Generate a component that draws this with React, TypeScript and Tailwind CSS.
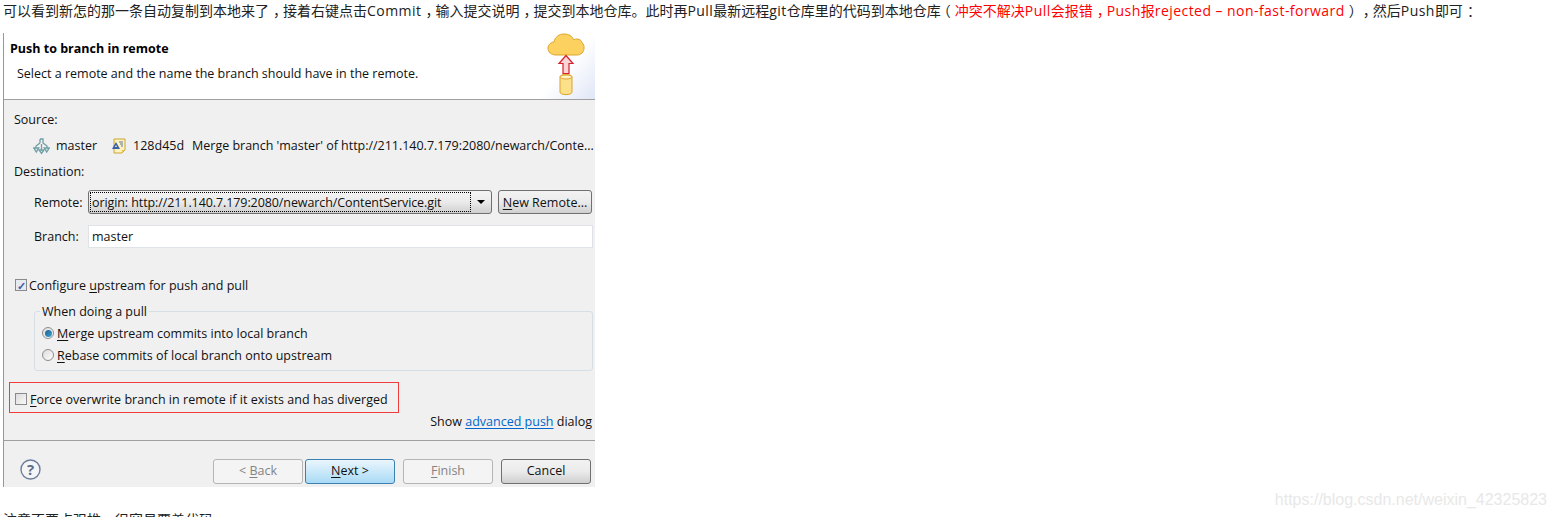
import type { ReactNode } from 'react'

const dialogFont = 'font-["Open_Sans","Noto_Sans",sans-serif] text-[12.5px] text-[#111]'

// underlined mnemonic letter
function Mn({ children }: { children: ReactNode }) {
  return <span className="underline underline-offset-2">{children}</span>
}

// full-width punctuation sits centred in its em box in the source page
function Right({ children }: { children: ReactNode }) {
  return <span className="inline-block pl-[4px] pr-[3px] [font-feature-settings:'halt']">{children}</span>
}

function Left({ children }: { children: ReactNode }) {
  return <span className="inline-block pl-[3px] pr-[4px] [font-feature-settings:'halt']">{children}</span>
}

function Latin({ children }: { children: ReactNode }) {
  return <span className="tracking-[0.45px]">{children}</span>
}

function HeaderArt() {
  return (
    <svg width="48" height="66" viewBox="0 0 48 66" className="shrink-0 ml-[8px]">
      <path d="M9 22c-5 0-8-3-8-7 0-3 3-6 6-6 1-5 5-8 10-8 5 0 8 2 10 6 1-1 2-1 3-1 3 0 5 2 5 4 2 1 2 3 2 5 0 4-3 7-7 7z" fill="#fdd15f" stroke="#dba52e" />
      <path d="M19 22.500l7 8h-4v10h-6v-10h-4z" fill="#fbd5d5" stroke="#d6202c" strokeWidth="1.2" />
      <path d="M13 44c0-3.500 12-3.500 12 0v15c0 3.500-12 3.500-12 0z" fill="#fde08a" stroke="#dba52e" />
      <ellipse cx="19" cy="44" rx="6" ry="2" fill="#fff2c4" stroke="#dba52e" />
    </svg>
  )
}

function BranchIcon() {
  return (
    <svg width="17" height="17" viewBox="0 0 17 17" fill="none" stroke="#6f9ea5" strokeWidth="1.3" className="shrink-0">
      <path d="M7 1h3v4l4 3v2M7 5V1M7 5L3 8v2M8.500 6v6" />
      <path d="M0.800 10h5l-2.500 4zM11.200 10h5l-2.500 4z" fill="#d5e8ea" />
      <path d="M6 12h5l-2.500 3.500z" fill="#d5e8ea" />
    </svg>
  )
}

function CommitIcon() {
  return (
    <svg width="16" height="16" viewBox="0 0 16 16">
      <path d="M3 1h11v11l-3 3H3z" fill="#fdf3bf" stroke="#c9a436" />
      <path d="M11 15l3-3h-3z" fill="#e5c04f" />
      <path d="M1 11l4-7 4 7z" fill="#3a62a8" />
      <path d="M4 9l1-2 1 2z" fill="#fdf3bf" />
      <path d="M8 4h4M9 6h3M10 8h2" stroke="#5a77a6" />
    </svg>
  )
}

function Radio({ checked }: { checked?: boolean }) {
  return (
    <span className="w-[12px] h-[12px] shrink-0 rounded-full border border-[#8d8d8d] bg-gradient-to-br from-[#dcdcdc] to-[#fdfdfd] flex items-center justify-center">
      {checked && <span className="w-[7px] h-[7px] rounded-full bg-gradient-to-br from-[#1b5f8f] to-[#3ea3d8]" />}
    </span>
  )
}

function WizardButton({ variant, children }: { variant: 'disabled' | 'primary' | 'normal'; children: ReactNode }) {
  const look = variant === 'primary'
    ? 'border-[#3c7fb1] bg-gradient-to-b from-[#eaf6fd] to-[#a9daf5] text-[#111]'
    : variant === 'normal'
      ? 'border-[#707070] bg-gradient-to-b from-[#f2f2f2] via-[#ebebeb] to-[#cfcfcf] text-[#111]'
      : 'border-[#b5b5b5] bg-[#f4f4f4] text-[#838383]'
  return (
    <div className={`w-[90px] h-[25px] rounded-[3px] border flex items-center justify-center ${look}`}>
      {children}
    </div>
  )
}

function PushDialog() {
  return (
    <div className={`ml-[3px] w-[592px] h-[454px] border-l border-[#8e9aa6] flex flex-col ${dialogFont}`}>
      <div className="h-[66px] bg-white flex shrink-0">
        <div className="flex-1 pl-[6px] pt-[7px]">
          <div className="font-bold leading-[17px] text-black">Push to branch in remote</div>
          <div className="pl-[7px] mt-[8px] leading-[17px]">Select a remote and the name the branch should have in the remote.</div>
        </div>
        <div className="w-[56px] bg-gradient-to-br from-white via-white to-[#dfe6f6] flex">
          <HeaderArt />
        </div>
      </div>
      <div className="h-[1px] bg-[#a0a0a0] shrink-0" />
      <div className="flex-1 bg-[#f0f0f0] flex flex-col pl-[10px] pt-[10px]">
        <div className="h-[18px] pt-[1px] leading-[18px]">Source:</div>
        <div className="h-[18px] mt-[8px] pl-[19px] pr-[2px] pt-[2px] flex items-center whitespace-nowrap">
          <BranchIcon />
          <span className="ml-[6px]">master</span>
          <span className="ml-[14px]"><CommitIcon /></span>
          <span className="ml-[6px]">128d45d</span>
          <span className="ml-[8px] tracking-[-0.02px]">Merge branch 'master' of http://211.140.7.179:2080/newarch/Conte...</span>
        </div>
        <div className="h-[18px] mt-[8px] pt-[1px] leading-[18px]">Destination:</div>
        <div className="h-[24px] mt-[10px] flex items-center pl-[20px] pr-[3px]">
          <span className="w-[54px] pt-[2px]">Remote:</span>
          <div className="w-[404px] h-[24px] rounded-[3px] border border-[#707070] bg-gradient-to-b from-[#f4f4f4] via-[#ebebeb] to-[#cfcfcf] flex items-center p-[1px]">
            <div className="flex-1 h-full border border-dotted border-black flex items-center pl-[1px] pt-[2px] whitespace-nowrap tracking-[-0.09px]">
              origin: http://211.140.7.179:2080/newarch/ContentService.git
            </div>
            <div className="w-[19px] flex justify-center">
              <span className="w-0 h-0 border-x-[4px] border-x-transparent border-t-[4px] border-t-black" />
            </div>
          </div>
          <div className="ml-[6px] w-[94px] h-[24px] pt-[2px] rounded-[3px] border border-[#707070] bg-gradient-to-b from-[#f2f2f2] via-[#ebebeb] to-[#cfcfcf] flex items-center justify-center">
            <span><Mn>N</Mn>ew Remote...</span>
          </div>
        </div>
        <div className="h-[23px] mt-[11px] flex items-center pl-[20px] pr-[2px]">
          <span className="w-[54px] pt-[2px]">Branch:</span>
          <div className="flex-1 h-[23px] bg-white border border-[#dfe3e8] flex items-center pl-[3px] pt-[2px]">master</div>
        </div>
        <div className="h-[18px] mt-[28px] flex items-center pl-[1px]">
          <span className="w-[12px] h-[12px] border border-[#8a8a8a] bg-[#e8eaf2] flex items-center justify-center text-[#3d5fa8] text-[11px] font-bold leading-none">✓</span>
          <span className="ml-[2px] pt-[2px]">Configure <Mn>u</Mn>pstream for push and pull</span>
        </div>
        <div className="relative ml-[20px] mr-[2px] mt-[17px] h-[60px] rounded-[3px] border border-[#d5dfe5] flex flex-col pl-[7px] pt-[12px] shrink-0">
          <span className="absolute left-[5px] top-[-9px] px-[2px] leading-[17px] bg-[#f0f0f0]">When doing a pull</span>
          <div className="h-[18px] flex items-center">
            <Radio checked />
            <span className="ml-[3px] pt-[2px]"><Mn>M</Mn>erge upstream commits into local branch</span>
          </div>
          <div className="h-[18px] mt-[4px] flex items-center">
            <Radio />
            <span className="ml-[3px] pt-[2px]"><Mn>R</Mn>ebase commits of local branch onto upstream</span>
          </div>
        </div>
        <div className="-ml-[5px] w-[390px] h-[31px] mt-[11px] border border-[#f23b3b] flex items-center pl-[5px] pt-[3px] shrink-0">
          <span className="w-[12px] h-[12px] border border-[#8a8a8a] bg-gradient-to-br from-[#dcdcdc] to-[#f8f8f8]" />
          <span className="ml-[3px] pt-[2px] tracking-[0.03px]"><Mn>F</Mn>orce overwrite branch in remote if it exists and has diverged</span>
        </div>
        <div className="h-[18px] -mt-[1px] pr-[3px] pt-[2px] flex items-center justify-end">
          Show&nbsp;<span className="text-[#0066cc] underline underline-offset-2">advanced push</span>&nbsp;dialog
        </div>
      </div>
      <div className="h-[1px] bg-[#a0a0a0] shrink-0" />
      <div className="h-[46px] bg-[#f0f0f0] flex items-start pt-[18px] pl-[16px] pr-[4px] shrink-0">
        <svg width="21" height="21" viewBox="0 0 21 21">
          <circle cx="10.500" cy="10.500" r="9.500" fill="#f4f5f8" stroke="#6d7d9a" strokeWidth="1.400" />
          <text x="10.500" y="15.500" textAnchor="middle" fontSize="15" fontWeight="700" fontFamily="Open Sans, sans-serif" fill="#5d6c88">?</text>
        </svg>
        <div className="ml-auto flex items-center">
          <WizardButton variant="disabled"><span>&lt; <Mn>B</Mn>ack</span></WizardButton>
          <div className="ml-[2px]"><WizardButton variant="primary"><span><Mn>N</Mn>ext &gt;</span></WizardButton></div>
          <div className="ml-[8px]"><WizardButton variant="disabled"><span><Mn>F</Mn>inish</span></WizardButton></div>
          <div className="ml-[8px]"><WizardButton variant="normal"><span>Cancel</span></WizardButton></div>
        </div>
      </div>
    </div>
  )
}

export default function App() {
  return (
    <div className='relative h-[517px] overflow-hidden bg-white font-["Open_Sans","Noto_Sans_CJK_SC",sans-serif] text-[14px] text-[#222]'>
      <p className="h-[22px] pl-[3px] leading-[22px] whitespace-nowrap">
        可以看到新怎的那一条自动复制到本地来了<Right>，</Right>接着右键点击<Latin>Commit</Latin><Right>，</Right>输入提交说明<Right>，</Right>提交到本地仓库。此时再<Latin>Pull</Latin>最新远程<Latin>git</Latin>仓库里的代码到本地仓库<Left>（</Left>
        <span className="text-[#f00]">冲突不解决<Latin>Pull</Latin>会报错<Right>，</Right><Latin>Push</Latin>报<Latin>rejected – non-fast-forward</Latin></span>
        <Right>）</Right><Right>，</Right>然后<Latin>Push</Latin>即可<Right>：</Right>
      </p>
      <div className="h-[11px]" />
      <PushDialog />
      <p className="mt-[22px] pl-[3px] leading-[22px] whitespace-nowrap">注意不要点强推<Right>，</Right>很容易覆盖代码</p>
      <div className='absolute right-[9px] top-[488px] font-["Liberation_Sans",sans-serif] text-[16px] text-[#e8e8e8] whitespace-nowrap'>https://blog.csdn.net/weixin_42325823</div>
    </div>
  )
}
